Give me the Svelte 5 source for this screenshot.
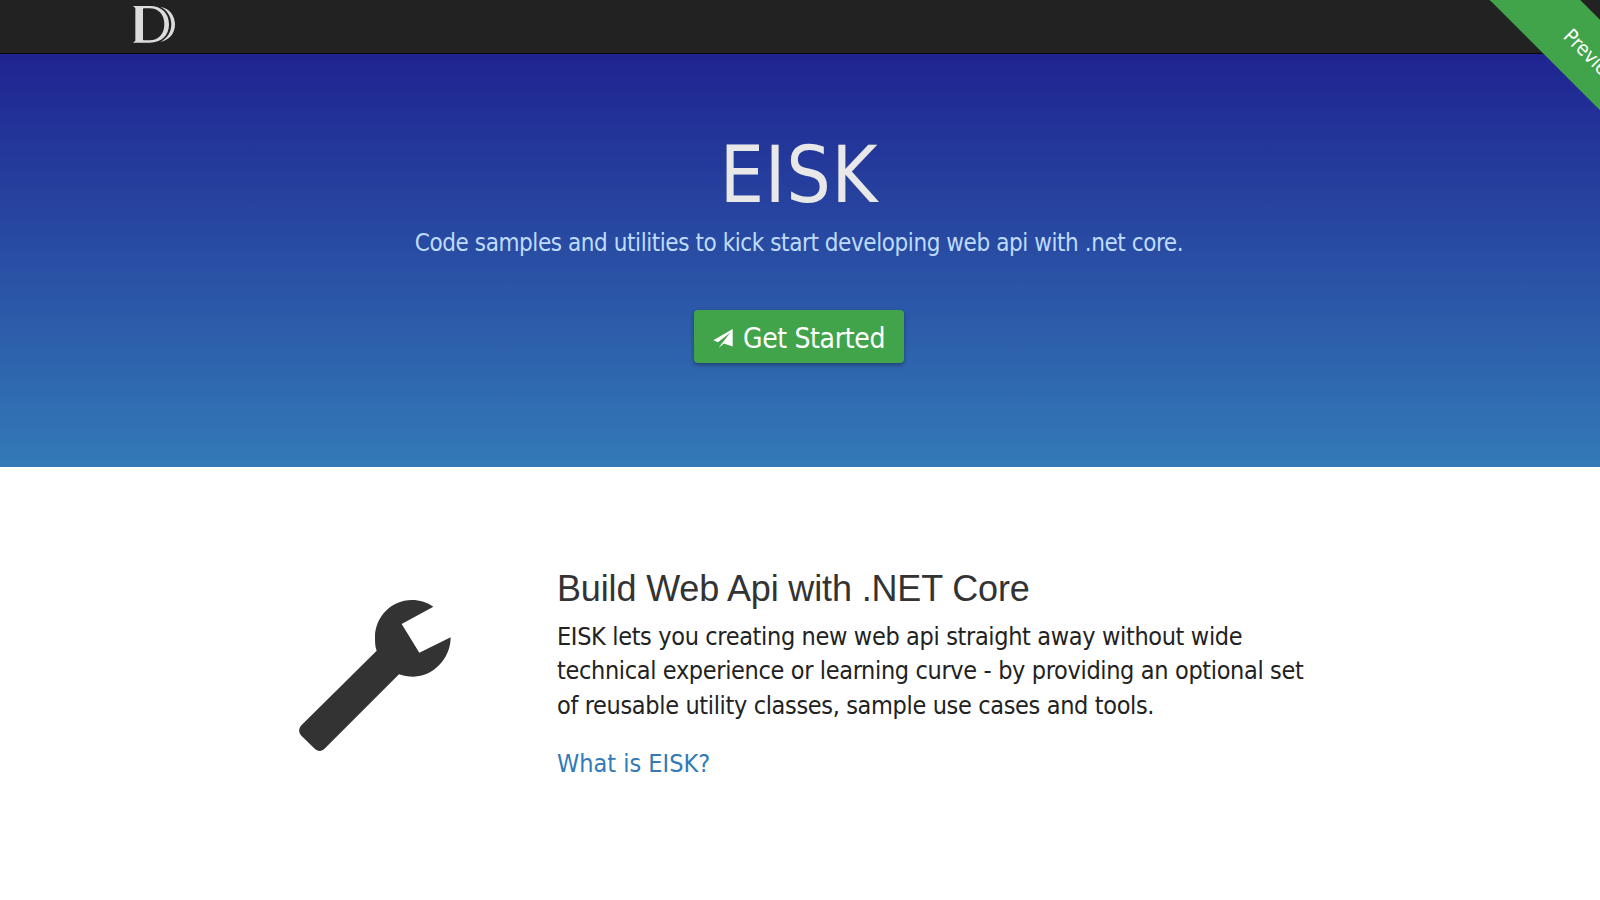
<script>
	const ribbon = 'Preview';
</script>

<header class="navbar">
	<a class="brand" href="#top" aria-label="Home">
		<svg width="42" height="37" viewBox="0 0 126 111">
			<path fill="#dcdcdc" fill-rule="evenodd" d="M0 0h50c36 0 58 22 58 55s-22 55-58 55H0l7-6V6L0 0zm34 7c-3 0-4 1-4 4v88c0 3 1 4 4 4h16c26 0 44-18 44-48S76 7 50 7H34z" />
			<path fill="#dcdcdc" d="M82 2c28 6 44 26 44 53s-16 47-44 53c18-9 33-27 33-53S100 11 82 2z" />
		</svg>
	</a>
</header>

<div class="ribbon"><span>{ribbon}</span></div>

<section class="hero">
	<h1>EISK</h1>
	<p class="lead">Code samples and utilities to kick start developing web api with .net core.</p>
	<a class="cta" href="#start">
		<svg width="20" height="19" viewBox="0 0 55 54">
			<path fill="#fff" d="M55 0 0 32l13 6L48 11 22 44l-7 10 15-13 25 9z" />
		</svg>
		Get Started
	</a>
</section>

<section class="feature">
	<div class="feature-icon">
		<svg width="190" height="180" viewBox="0 0 570 540">
			<path fill="#333" d="M460 80 365 132 418 218 512 172C512 235 460 290 400 290 385 290 370 288 357 283L135 505C125 515 115 515 105 507L65 468C55 458 55 445 65 435L290 212C285 200 285 185 285 172 285 110 335 60 395 60 420 60 442 67 460 80Z" />
		</svg>
	</div>
	<div class="feature-body">
		<h2>Build Web Api with .NET Core</h2>
		<p>EISK lets you creating new web api straight away without wide technical experience or learning curve - by providing an optional set of reusable utility classes, sample use cases and tools.</p>
		<a href="#what">What is EISK?</a>
	</div>
</section>

<style>
	:global(body) {
		margin: 0;
		background: #fff;
		font-family: "DejaVu Sans Condensed", "DejaVu Sans", sans-serif;
		overflow: hidden;
	}

	.navbar {
		height: 53px;
		background: #222;
		border-bottom: 1px solid #080808;
		padding-left: 133px;
		display: flex;
		align-items: flex-start;
	}

	.brand {
		display: block;
		height: 37px;
		margin-top: 6px;
	}

	.ribbon {
		position: absolute;
		top: 0;
		right: 0;
		width: 110px;
		height: 110px;
		overflow: hidden;
	}

	.ribbon span {
		position: absolute;
		top: 25px;
		left: -28px;
		width: 260px;
		height: 64px;
		line-height: 64px;
		background: #41a34a;
		color: #fff;
		font-size: 20px;
		text-align: center;
		transform: rotate(45deg);
	}

	.hero {
		height: 413px;
		background: linear-gradient(#1f2391, #337ab7);
		text-align: center;
		box-sizing: border-box;
		padding: 78px 2px 0 0;
	}

	h1 {
		margin: 0;
		font-size: 78px;
		font-weight: 400;
		line-height: 86px;
		letter-spacing: 0.7px;
		color: #e8e8e8;
	}

	.lead {
		margin: 8px 0 0;
		font-size: 24px;
		line-height: 34px;
		letter-spacing: -0.43px;
		color: #bfdcff;
	}

	.cta {
		display: inline-flex;
		align-items: center;
		gap: 10px;
		margin-top: 50px;
		height: 53px;
		box-sizing: border-box;
		padding: 3px 19px 0;
		border-radius: 4px;
		background: #41a34a;
		color: #fff;
		font-size: 28px;
		letter-spacing: -0.35px;
		text-decoration: none;
		box-shadow: 0 2px 4px rgba(0, 0, 0, 0.35);
	}

	.feature {
		display: flex;
		padding: 102px 0 0 280px;
	}

	.feature-icon {
		width: 277px;
		padding-top: 11px;
	}

	.feature-body {
		width: 760px;
	}

	h2 {
		margin: 0;
		font-family: "Liberation Sans", Arial, sans-serif;
		font-size: 36px;
		font-weight: 400;
		line-height: 40px;
		letter-spacing: -0.15px;
		color: #333;
	}

	.feature-body p {
		margin: 11px 0 0;
		font-size: 25px;
		line-height: 34.3px;
		letter-spacing: -0.35px;
		color: #222;
	}

	.feature-body a {
		display: block;
		margin-top: 24px;
		font-size: 25px;
		line-height: 34px;
		color: #337ab7;
		text-decoration: none;
	}
</style>
